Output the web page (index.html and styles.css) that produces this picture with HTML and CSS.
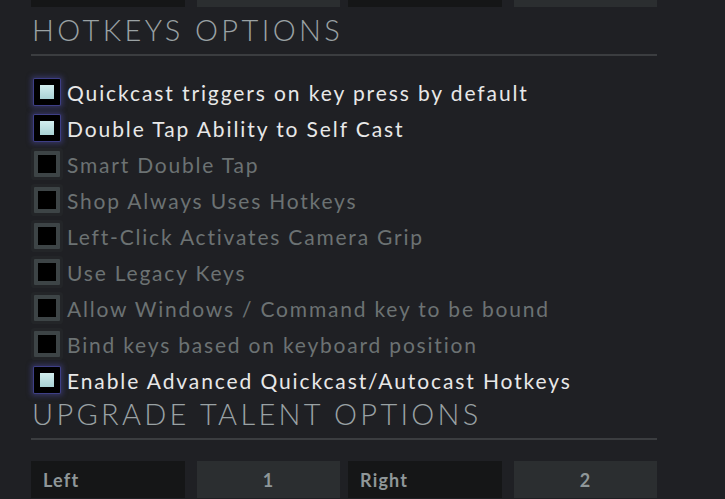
FILE: index.html
```html
<!DOCTYPE html>
<html>
<head>
<meta charset="utf-8">
<link rel="stylesheet" href="styles.css">
</head>
<body>
<div class="panel">
  <div class="keyrow top">
    <div class="key name">Top</div>
    <div class="key val">3</div>
    <div class="key name">Up</div>
    <div class="key val">4</div>
  </div>

  <h2 class="heading">HOTKEYS OPTIONS</h2>
  <ul class="options">
    <li class="opt on"><span class="box"></span><span class="label">Quickcast triggers on key press by default</span></li>
    <li class="opt on"><span class="box"></span><span class="label">Double Tap Ability to Self Cast</span></li>
    <li class="opt"><span class="box"></span><span class="label">Smart Double Tap</span></li>
    <li class="opt"><span class="box"></span><span class="label">Shop Always Uses Hotkeys</span></li>
    <li class="opt"><span class="box"></span><span class="label">Left-Click Activates Camera Grip</span></li>
    <li class="opt"><span class="box"></span><span class="label">Use Legacy Keys</span></li>
    <li class="opt"><span class="box"></span><span class="label">Allow Windows / Command key to be bound</span></li>
    <li class="opt"><span class="box"></span><span class="label">Bind keys based on keyboard position</span></li>
    <li class="opt on"><span class="box"></span><span class="label">Enable Advanced Quickcast/Autocast Hotkeys</span></li>
  </ul>

  <h2 class="heading heading2">UPGRADE TALENT OPTIONS</h2>
  <div class="keyrow bottom">
    <div class="key name">Left</div>
    <div class="key val">1</div>
    <div class="key name">Right</div>
    <div class="key val">2</div>
  </div>
</div>
</body>
</html>
```
FILE: styles.css
```css
html, body {
  margin: 0;
  padding: 0;
  background: #1f2024;
  height: 100%;
  overflow: hidden;
}
body {
  font-family: Lato, "Open Sans", sans-serif;
}
.panel {
  width: 626px;
  margin-left: 31px;
}
.keyrow {
  display: flex;
  height: 37px;
}
.keyrow.top {
  margin-top: -30px;
}
.key {
  height: 37px;
  display: flex;
  align-items: center;
  font-size: 18px;
  font-weight: 700;
  letter-spacing: 1.2px;
  color: #8f9799;
}
.key.name {
  width: 154px;
  background: #151617;
  padding-left: 12px;
  box-sizing: border-box;
}
.key.val {
  width: 143px;
  background: #2b2e30;
  justify-content: center;
}
.key.name + .key.val { margin-left: 12px; }
.key.val + .key.name { margin-left: 8px; }

.heading {
  margin: 0;
  font-family: Lato, sans-serif;
  font-weight: 300;
  font-size: 29px;
  letter-spacing: 3.4px;
  color: #9aa2a4;
  line-height: 30px;
  padding-top: 8px;
  padding-bottom: 9px;
  border-bottom: 2px solid #3b3d40;
  padding-left: 1px;
}
.heading2 {
  padding-top: 1px;
  letter-spacing: 3.3px;
}
.options {
  list-style: none;
  margin: 0;
  padding: 18px 0 0 0;
}
.opt {
  display: flex;
  align-items: center;
  height: 36px;
}
.box {
  width: 26px;
  height: 26px;
  box-sizing: border-box;
  margin-left: 3px;
  margin-right: 7px;
  flex: none;
}
.opt .box {
  background: #000;
  border: 4px solid #3d4446;
  box-shadow: 0 0 0 3px #232528;
  border-radius: 1px;
}
.opt.on .box {
  border: 6px solid #000;
  background: linear-gradient(180deg, #d2eeee 0%, #a9d2d4 100%);
  box-shadow: 0 0 0 1px #3e3f86, 0 0 5px 3px rgba(70, 70, 150, 0.5);
}
.label {
  font-size: 21px;
  letter-spacing: 1.8px;
  color: #6c7273;
  white-space: nowrap;
}
.opt.on .label {
  color: #e8e8e8;
  letter-spacing: 1.9px;
}
.keyrow.bottom {
  margin-top: 21px;
}
```
